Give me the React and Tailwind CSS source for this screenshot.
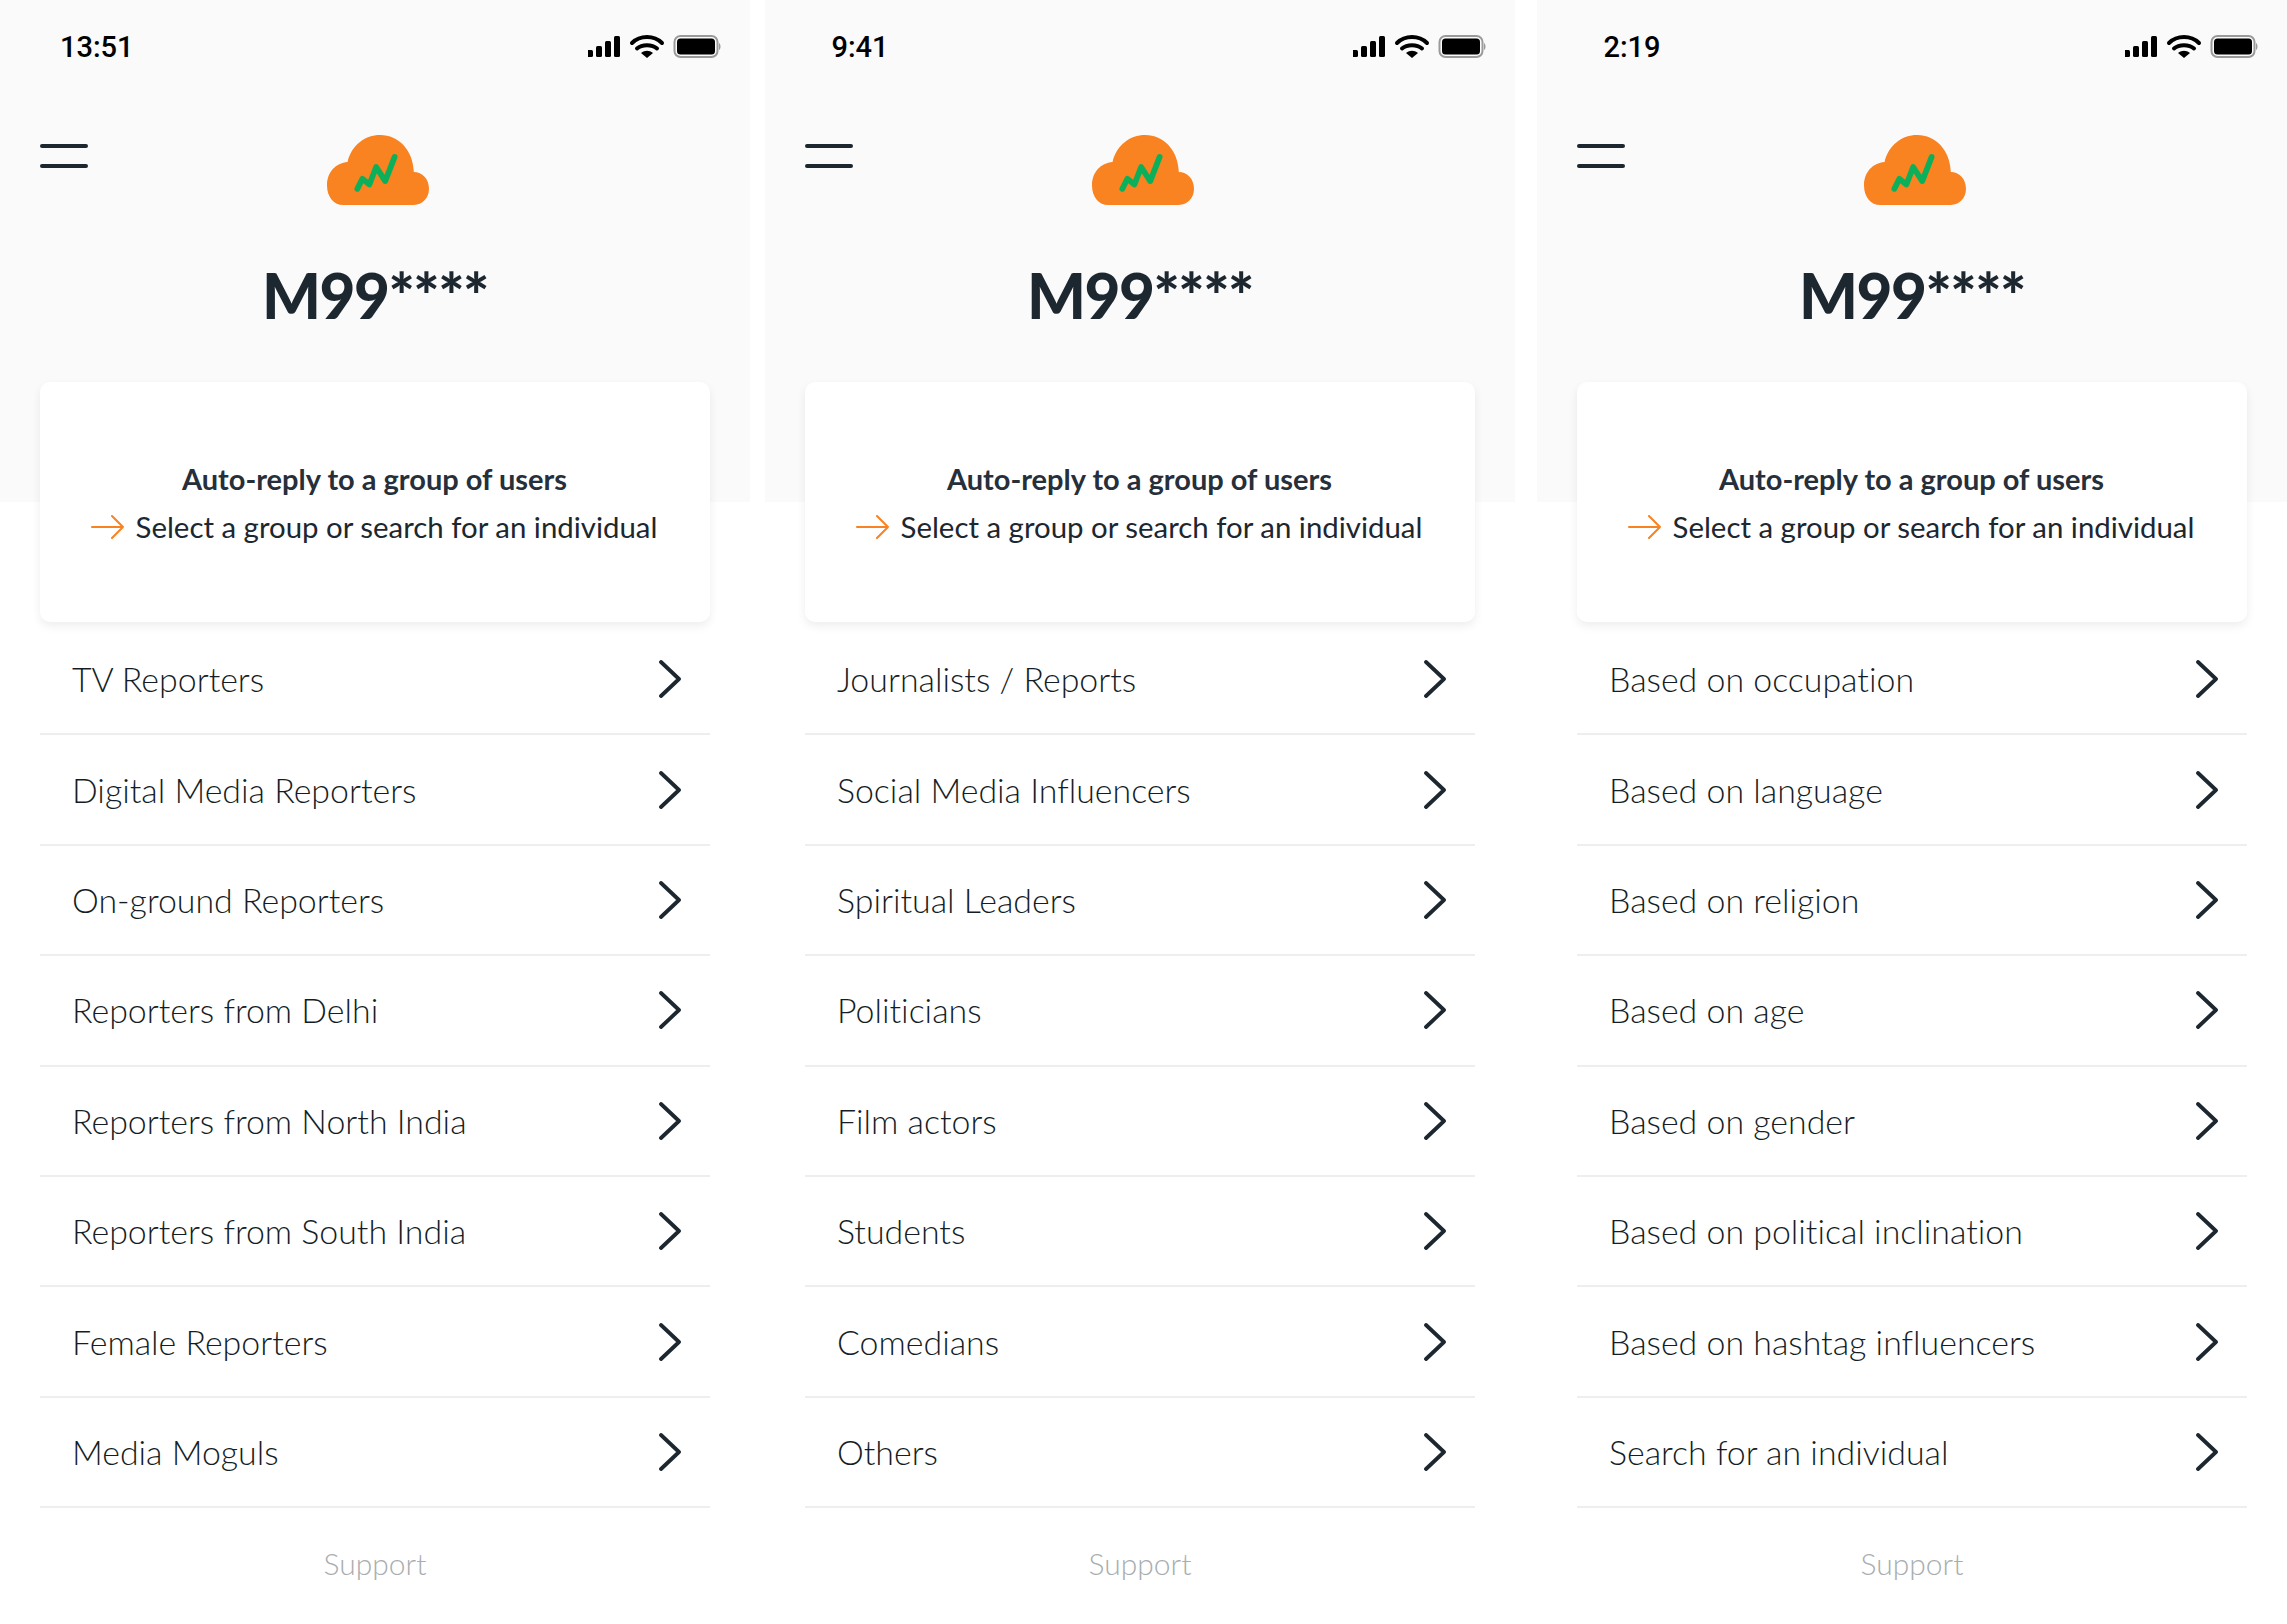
import React from 'react';

const panels = [
  {
    time: '13:51',
    gap: '',
    rows: ['TV Reporters', 'Digital Media Reporters', 'On-ground Reporters', 'Reporters from Delhi', 'Reporters from North India', 'Reporters from South India', 'Female Reporters', 'Media Moguls'],
  },
  {
    time: '9:41',
    gap: 'ml-[15px]',
    rows: ['Journalists / Reports', 'Social Media Influencers', 'Spiritual Leaders', 'Politicians', 'Film actors', 'Students', 'Comedians', 'Others'],
  },
  {
    time: '2:19',
    gap: 'ml-[22px]',
    rows: ['Based on occupation', 'Based on language', 'Based on religion', 'Based on age', 'Based on gender', 'Based on political inclination', 'Based on hashtag influencers', 'Search for an individual'],
  },
];

const StatusIcons = () => (
  <svg width="134" height="24" viewBox="0 0 134 24" className="block">
    {/* signal */}
    <rect x="-1" y="15" width="6" height="7" rx="1.5" fill="#000" />
    <rect x="8" y="11" width="6" height="11" rx="1.5" fill="#000" />
    <rect x="17" y="6" width="6" height="16" rx="1.5" fill="#000" />
    <rect x="26" y="1" width="6" height="21" rx="1.5" fill="#000" />
    {/* wifi */}
    <path d="M44 8 C52 0 66 0 74 8" fill="none" stroke="#000" strokeWidth="4" strokeLinecap="round" />
    <path d="M49 13.5 C54 9 64 9 69 13.5" fill="none" stroke="#000" strokeWidth="4" strokeLinecap="round" />
    <path d="M53 18 L59 23 L65 18 C61 15 57 15 53 18 Z" fill="#000" />
    {/* battery */}
    <rect x="86.5" y="1" width="43" height="21" rx="6" fill="none" stroke="#9a9a9a" strokeWidth="2" />
    <rect x="89" y="3.5" width="38" height="16" rx="3.5" fill="#000" />
    <path d="M131 8 C133 9 133 14 131 15 Z" fill="#9a9a9a" />
  </svg>
);

const CloudLogo = () => (
  <svg width="102" height="70" viewBox="82 45 303 208" className="block">
    <path
      d="M130 253 C103 253 82 230 82 195 C82 155 108 128 143 125 C155 75 195 45 240 45 C295 45 338 90 340 155 C365 155 385 175 385 205 C385 233 365 253 340 253 Z"
      fill="#f98221"
    />
    <path
      d="M172 205 L187 175 L208 192 L228 140 L255 182 L283 110"
      fill="none"
      stroke="#0db05a"
      strokeWidth="17"
      strokeLinecap="round"
      strokeLinejoin="round"
    />
  </svg>
);

const Chevron = () => (
  <svg width="24" height="38" viewBox="0 0 24 38" className="block">
    <path d="M3 2 L21 19 L3 36" fill="none" stroke="#1c2730" strokeWidth="3.8" strokeLinecap="round" strokeLinejoin="round" />
  </svg>
);

const Arrow = () => (
  <svg width="34" height="24" viewBox="0 0 34 24" className="block">
    <path d="M1 12 H32 M21 1 L32 12 L21 23" fill="none" stroke="#f98221" strokeWidth="2" strokeLinecap="round" strokeLinejoin="round" />
  </svg>
);

const Panel = ({ time, gap, rows }) => (
  <div className={`w-[750px] shrink-0 font-['Lato',sans-serif] text-[#1c2730] ${gap}`}>
    <div className="h-[502px] bg-[#fafafa]">
      <div className="flex items-center justify-between pt-[33px] pl-[60px] pr-[28px]">
        <span className="w-[70px] text-center font-['Roboto',sans-serif] text-[29px] leading-[28px] font-medium text-black">{time}</span>
        <StatusIcons />
      </div>
      <div className="flex items-start pt-[83px] pl-[40px]">
        <div className="w-[48px]">
          <div className="h-[4px] rounded-full bg-[#1c2730]" />
          <div className="mt-[16px] h-[4px] rounded-full bg-[#1c2730]" />
        </div>
        <div className="ml-[239px] -mt-[9px]">
          <CloudLogo />
        </div>
      </div>
      <div className="pt-[52px] text-center text-[62px] leading-[76px] font-black tracking-[-1.5px]">M99****</div>
    </div>
    <div className="mx-[40px] -mt-[120px]">
      <div className="relative flex h-[240px] flex-col items-center justify-center rounded-[10px] bg-white shadow-[0_4px_10px_rgba(0,0,0,0.07)]">
        <div className="pt-[2px] pr-[1px] text-[29px] leading-[36px] font-bold text-[#262f3a]">Auto-reply to a group of users</div>
        <div className="mt-[12px] flex items-center pr-[2px] text-[29.4px] leading-[36px] text-[#1c2730]">
          <Arrow />
          <span className="ml-[11px]">Select a group or search for an individual</span>
        </div>
      </div>
      <div className="mt-[3px]">
        {rows.map((row) => (
          <div key={row} className="flex h-[110.4px] items-center justify-between border-b-2 border-[#eeeeee] pl-[32px] pr-[28px]">
            <span className="text-[33.9px] leading-[40px] font-light text-[#141d25] [font-variant-ligatures:none]">{row}</span>
            <Chevron />
          </div>
        ))}
      </div>
      <div className="pt-[37px] text-center text-[30px] leading-[36px] font-light text-[#a9adb0]">Support</div>
    </div>
  </div>
);

export default function App() {
  return (
    <div className="flex h-[1624px] w-[2287px] overflow-hidden bg-white">
      {panels.map((p) => (
        <Panel key={p.time} time={p.time} gap={p.gap} rows={p.rows} />
      ))}
    </div>
  );
}
